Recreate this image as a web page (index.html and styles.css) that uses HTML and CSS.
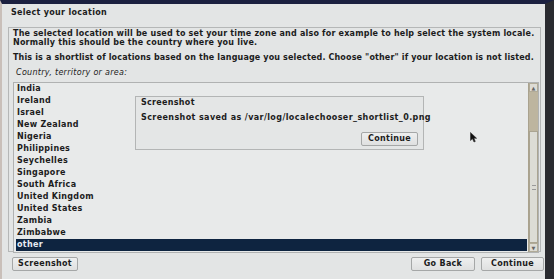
FILE: index.html
```html
<!DOCTYPE html>
<html lang="en">
<head>
    <meta charset="UTF-8">
    <title>Select your location</title>
    <link rel="stylesheet" href="styles.css">
</head>
<body>
    <div class="screen">
        <h1 class="title">Select your location</h1>

        <div class="frame">
            <p class="desc">The selected location will be used to set your time zone and also for example to help select the system locale.<br>Normally this should be the country where you live.</p>
            <p class="desc tight">This is a shortlist of locations based on the language you selected. Choose "other" if your location is not listed.</p>
            <p class="label">Country, territory or area:</p>

            <div class="listbox">
                <ul class="list">
                    <li>India</li>
                    <li>Ireland</li>
                    <li>Israel</li>
                    <li>New Zealand</li>
                    <li>Nigeria</li>
                    <li>Philippines</li>
                    <li>Seychelles</li>
                    <li>Singapore</li>
                    <li>South Africa</li>
                    <li>United Kingdom</li>
                    <li>United States</li>
                    <li>Zambia</li>
                    <li>Zimbabwe</li>
                    <li class="selected">other</li>
                </ul>
                <div class="scrollbar">
                    <div class="arrow">&#9650;</div>
                    <div class="trough">
                        <div class="thumb"><span class="grip"></span></div>
                    </div>
                    <div class="arrow">&#9660;</div>
                </div>
            </div>
        </div>

        <div class="buttons">
            <button class="button shot">Screenshot</button>
            <span class="spacer"></span>
            <button class="button back">Go Back</button>
            <button class="button next">Continue</button>
        </div>

        <div class="dialog">
            <p class="dialog-title">Screenshot</p>
            <p class="dialog-msg">Screenshot saved as /var/log/localechooser_shortlist_0.png</p>
            <div class="dialog-buttons">
                <button class="button ok">Continue</button>
            </div>
        </div>

        <svg class="cursor" width="8" height="11" viewBox="0 0 8 11">
            <path d="M0.5 0.5 L0.5 8.5 L2.5 6.8 L4 10 L5.3 9.4 L3.9 6.3 L6.6 6.3 Z" fill="#111" stroke="#333" stroke-width="0.6"/>
        </svg>
    </div>
</body>
</html>
```

FILE: styles.css
```css
* {
    box-sizing: border-box;
}
body {
    margin: 0;
    width: 554px;
    height: 279px;
    overflow: hidden;
    background: #e3e5e5;
    font-family: "DejaVu Sans", sans-serif;
    font-weight: bold;
    font-size: 8px;
    letter-spacing: 0.3px;
    color: #1c1c1c;
}
.screen {
    position: relative;
    height: 279px;
    border-top: 4px solid #1b2040;
    border-right: 9px solid #2a2b30;
    border-left: 2px solid #c9bfb9;
}
.title {
    margin: 0;
    padding: 4px 0 0 9px;
    height: 23px;
    font-size: 8px;
    line-height: 10px;
}
.frame {
    margin-left: 6px;
    width: 533px;
    height: 225px;
    border: 1px solid #b5b7b7;
    padding: 1px 1px 0 4px;
}
.desc {
    margin: 0 0 6px;
    line-height: 9px;
    letter-spacing: 0.2px;
    white-space: nowrap;
}
.desc.tight {
    letter-spacing: 0.15px;
}
.label {
    margin: 1px 0 5px;
    padding-left: 3px;
    line-height: 9px;
    font-weight: normal;
    font-style: italic;
}
.listbox {
    display: flex;
    height: 171px;
    border: 1px solid #b0b2b2;
    background: #e8eaea;
}
.list {
    flex: 1;
    margin: 0;
    padding: 0 1px 0 2px;
    list-style: none;
}
.list li {
    height: 12px;
    line-height: 12px;
    padding-left: 1px;
}
.list .selected {
    background: #0e2440;
    color: #e8ecf2;
}
.scrollbar {
    width: 10px;
    display: flex;
    flex-direction: column;
    border-left: 1px solid #a9a28e;
}
.arrow {
    height: 9px;
    font-size: 5px;
    line-height: 8px;
    text-align: center;
    color: #666;
    background: #dedcd4;
    border: 1px solid #b1ab98;
}
.trough {
    flex: 1;
    display: flex;
    flex-direction: column;
    justify-content: flex-end;
    background: #bdb59f;
}
.thumb {
    height: 112px;
    display: flex;
    align-items: center;
    justify-content: center;
    background: #dcdcd5;
    border: 1px solid #aaa491;
}
.grip {
    width: 4px;
    height: 5px;
    border-top: 1px solid #999;
    border-bottom: 1px solid #999;
}
.buttons {
    display: flex;
    margin-top: 5px;
    padding: 0 1px 0 10px;
}
.spacer {
    flex: 1;
}
.button {
    height: 14px;
    padding: 0;
    margin: 0;
    font-family: "DejaVu Sans", sans-serif;
    font-weight: bold;
    font-size: 8px;
    letter-spacing: 0.3px;
    line-height: 12px;
    color: #1c1c1c;
    background: linear-gradient(#eeefef, #dfe0e0);
    border: 1px solid #a5a7a7;
    border-radius: 2px;
}
.shot {
    width: 66px;
}
.back {
    width: 64px;
    margin-right: 6px;
}
.next {
    width: 63px;
}
.dialog {
    position: absolute;
    left: 133px;
    top: 92px;
    width: 289px;
    height: 54px;
    padding: 1px 5px 0;
    background: #e4e6e6;
    border: 1px solid #b3b5b5;
}
.dialog-title {
    margin: 0;
    line-height: 10px;
}
.dialog-msg {
    margin: 5px 0 0;
    line-height: 10px;
    letter-spacing: 0.4px;
    white-space: nowrap;
}
.dialog-buttons {
    display: flex;
    justify-content: flex-end;
    margin-top: 9px;
}
.ok {
    width: 57px;
}
.cursor {
    position: absolute;
    left: 468px;
    top: 128px;
}
```
